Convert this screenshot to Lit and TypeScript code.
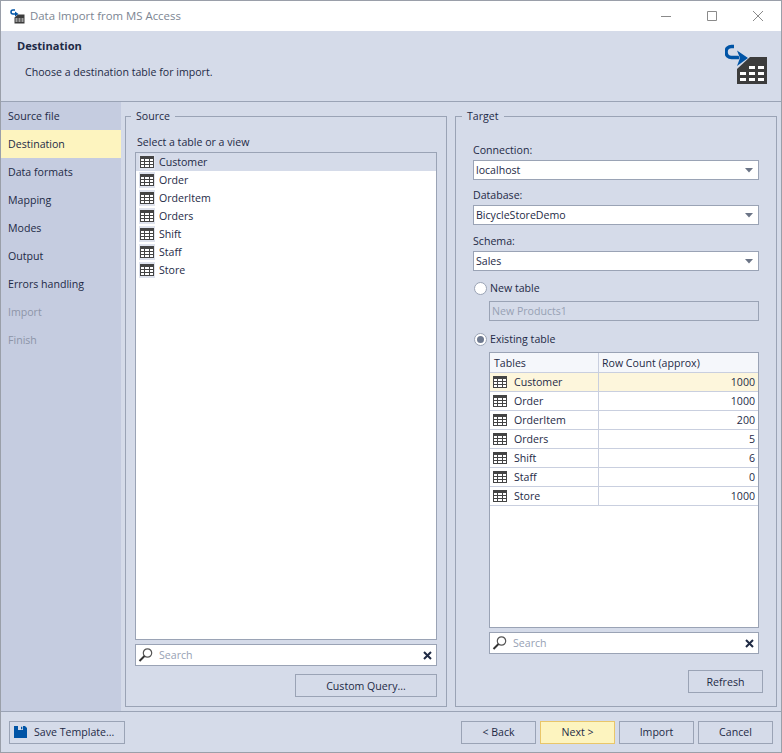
import { LitElement, css, html, svg } from 'lit';
import { customElement } from 'lit/decorators.js';

const SIDE = [
    ['Source file', ''],
    ['Destination', 'active'],
    ['Data formats', ''],
    ['Mapping', ''],
    ['Modes', ''],
    ['Output', ''],
    ['Errors handling', ''],
    ['Import', 'off'],
    ['Finish', 'off'],
];
const SOURCE = ['Customer', 'Order', 'OrderItem', 'Orders', 'Shift', 'Staff', 'Store'];
const COUNTS = ['1000', '1000', '200', '5', '6', '0', '1000'];

const gridIcon = svg`<svg class="grid" width="14" height="12" viewBox="0 0 14 12">
    <path fill="#444" d="M0 0h14v12H0z"/>
    <path fill="#fff" d="M1 3h3v2H1zM5 3h4v2H5zM10 3h3v2h-3zM1 6h3v2H1zM5 6h4v2H5zM10 6h3v2h-3zM1 9h3v2H1zM5 9h4v2H5zM10 9h3v2h-3z"/>
</svg>`;

const searchIcon = svg`<svg width="16" height="16" viewBox="0 0 16 16">
    <circle cx="9.500" cy="6" r="4.200" fill="none" stroke="#555" stroke-width="1.200"/>
    <path d="M6.500 9 1.500 14" stroke="#333" stroke-width="2" fill="none"/>
</svg>`;

const clearIcon = svg`<svg width="9" height="9" viewBox="0 0 9 9">
    <path d="M1 1l7 7M8 1 1 8" stroke="#1f2a44" stroke-width="2" fill="none"/>
</svg>`;

const caret = svg`<svg class="caret" width="8" height="5" viewBox="0 0 8 5"><path d="M0 0h8L4 4.500z" fill="#6b7486"/></svg>`;

@customElement('app-root')
export class AppRoot extends LitElement {
    static styles = css`
        :host {
            display: flex;
            flex-direction: column;
            box-sizing: border-box;
            width: 782px;
            height: 753px;
            border: 1px solid #9a9fa9;
            background: #d5dbe9;
            color: #1e2a46;
            font: 10.6px/16px "Open Sans", sans-serif;
            overflow: hidden;
        }
        * { box-sizing: border-box; }

        .titlebar {
            display: flex;
            align-items: center;
            height: 30px;
            background: #fff;
            padding-left: 9px;
            color: #7c8592;
            font-size: 11.4px;
            flex: none;
        }
        .titlebar .app { margin-right: 5px; }
        .titlebar .label { flex: 1; }
        .wc { display: flex; }
        .wc span { width: 46px; height: 30px; display: flex; align-items: center; justify-content: center; }

        .header {
            position: relative;
            height: 71px;
            flex: none;
            border-bottom: 1px solid #9aa3b5;
            padding: 7px 16px;
        }
        .header h1 { margin: 0; font-size: 11.1px; line-height: 16px; font-weight: 700; }
        .header p { margin: 10px 0 0 8px; }
        .header svg { position: absolute; right: 14px; top: 13px; }

        .body { flex: 1; display: flex; min-height: 0; }
        .side { width: 120px; flex: none; background: #c5cce0; }
        .side div { height: 28px; line-height: 28px; padding-left: 7px; }
        .side .active { background: #fdf4bf; }
        .side .off { color: #8d95a8; }

        .panes { flex: 1; display: flex; gap: 8px; padding: 6px 4px 4px 4px; min-width: 0; }
        fieldset {
            margin: 0;
            min-width: 0;
            border: 1px solid #9aa3b5;
            padding: 0;
            flex: none;
            display: flex;
            flex-direction: column;
        }
        legend { padding: 0 5px; line-height: 16px; }
        .source legend { margin-left: -4px; }
        .target legend { margin-left: -11px; }
        .source { width: 322px; padding: 10px 9px 9px 9px; }
        .target { width: 322px; padding: 18px 17px 13px 17px; }

        .caption { line-height: 16px; margin-bottom: 2px; padding-left: 2px; }
        .list { flex: 1; background: #fff; border: 1px solid #9aa3b5; min-height: 0; }
        .list div { display: flex; align-items: center; height: 18px; padding-left: 3px; gap: 4px; }
        .list .sel { background: #d5dbe9; }
        .list .grid { width: 16px; height: 16px; padding: 2px 1px; background: #dfe3ee; }

        .search {
            flex: none;
            display: flex;
            align-items: center;
            height: 22px;
            margin-top: 4px;
            background: #fff;
            border: 1px solid #9aa3b5;
            padding: 0 4px 0 2px;
            color: #97a1b4;
        }
        .search span { flex: 1; margin-left: 5px; }

        button {
            font: inherit;
            color: inherit;
            background: #d5dbe9;
            border: 1px solid #9aa3b5;
            padding: 0;
            height: 23px;
            display: inline-flex;
            align-items: center;
            justify-content: center;
            white-space: nowrap;
        }
        .custom { width: 142px; align-self: flex-end; margin-top: 8px; }
        .refresh { width: 75px; align-self: flex-end; margin: 16px -4px 0 0; }

        .field-label { line-height: 16px; margin-bottom: 2px; }
        .select {
            display: flex;
            align-items: center;
            justify-content: space-between;
            height: 20px;
            background: #fff;
            border: 1px solid #9aa3b5;
            padding: 0 4px 0 2px;
            margin-bottom: 8px;
        }
        .select.tight { margin-bottom: 7px; }
        .select .caret { margin-right: 1px; }

        .radio { display: flex; align-items: center; height: 16px; gap: 3px; margin-left: 1px; }
        .radio.first { margin-top: 2px; }
        .dot {
            width: 13px;
            height: 13px;
            border-radius: 50%;
            background: #fff;
            border: 1px solid #9aa3b5;
            display: flex;
            align-items: center;
            justify-content: center;
        }
        .dot.on::after {
            content: '';
            width: 7px;
            height: 7px;
            border-radius: 50%;
            background: #6f7a90;
        }
        .disabled-input {
            height: 20px;
            margin: 5px 0 10px 16px;
            border: 1px solid #9aa3b5;
            color: #97a1b4;
            line-height: 18px;
            padding-left: 2px;
        }

        .table {
            flex: 1;
            min-height: 0;
            margin: 5px 0 0 16px;
            background: #fff;
            border: 1px solid #9aa3b5;
        }
        .table .row { display: grid; grid-template-columns: 109px 1fr; height: 19px; border-bottom: 1px solid #c9cfdf; }
        .table .row > div { display: flex; align-items: center; }
        .table .row > div:first-child { border-right: 1px solid #c9cfdf; padding-left: 3px; gap: 7px; }
        .table .num { justify-content: flex-end; padding-right: 3px; }
        .table .head { height: 20px; background: #f5f7fb; }
        .table .head > div:first-child { padding-left: 4px; }
        .table .head > div:last-child { padding-left: 3px; }
        .table .cur > div { background: #fdf6dc; }
        .target .search { margin-left: 16px; }

        .footer {
            flex: none;
            display: flex;
            align-items: center;
            height: 41px;
            border-top: 1px solid #9aa3b5;
            padding: 0 8px 0 8px;
            gap: 4px;
        }
        .footer button { width: 75px; }
        .footer .save { width: 116px; margin-right: auto; gap: 7px; justify-content: flex-start; padding-left: 4px; }
        .footer .next { background: #fdf4bf; border-color: #e9c66a; }
    `;

    render() {
        return html`
            <div class="titlebar">
                <svg class="app" width="15" height="15" viewBox="0 0 15 15">
                    <path d="M5 1H3a2 2 0 0 0 0 4h2.500" fill="none" stroke="#0054a6" stroke-width="1.500"/>
                    <path d="M5 2.500 8.500 5 5 7.500z" fill="#0054a6"/>
                    <path d="M8 5.500h6.500v9h-10V8.500z" fill="#3c3c3c"/>
                    <path fill="#fff" d="M5.500 9.500h2v1h-2zM8.500 9.500h2v1h-2zM11.500 9.500h2v1h-2zM5.500 11.500h2v1h-2zM8.500 11.500h2v1h-2zM11.500 11.500h2v1h-2z"/>
                </svg>
                <span class="label">Data Import from MS Access</span>
                <div class="wc">
                    <span><svg width="10" height="10"><path d="M0 5.500h10" stroke="#8a8a8a"/></svg></span>
                    <span><svg width="10" height="10"><path d="M.5.5h9v9h-9z" fill="none" stroke="#8a8a8a"/></svg></span>
                    <span><svg width="10" height="10"><path d="M0 0l10 10M10 0 0 10" stroke="#8a8a8a"/></svg></span>
                </div>
            </div>
            <div class="header">
                <h1>Destination</h1>
                <p>Choose a destination table for import.</p>
                <svg width="42" height="40" viewBox="0 0 42 40">
                    <path d="M12 25l13-12h17v27H12z" fill="#3c3c3c"/>
                    <path fill="#fff" d="M24 22h6v3h-6zM33 22h6v3h-6zM15 28h6v3h-6zM24 28h6v3h-6zM33 28h6v3h-6zM15 34h6v3h-6zM24 34h6v3h-6zM33 34h6v3h-6z"/>
                    <path d="M9 2.500H6.500a4.800 4.800 0 0 0 0 11H15" fill="none" stroke="#0054a6" stroke-width="3.600"/>
                    <path d="M12 6.500 23 14 12 22l3-8z" fill="#0054a6" stroke="#d5dbe9" stroke-width="1" paint-order="stroke"/>
                </svg>
            </div>
            <div class="body">
                <div class="side">
                    ${SIDE.map(([t, c]) => html`<div class=${c}>${t}</div>`)}
                </div>
                <div class="panes">
                    <fieldset class="source">
                        <legend>Source</legend>
                        <div class="caption">Select a table or a view</div>
                        <div class="list">
                            ${SOURCE.map((s, i) => html`<div class=${i === 0 ? 'sel' : ''}>${gridIcon}${s}</div>`)}
                        </div>
                        <div class="search">${searchIcon}<span>Search</span>${clearIcon}</div>
                        <button class="custom">Custom Query...</button>
                    </fieldset>
                    <fieldset class="target">
                        <legend>Target</legend>
                        <div class="field-label">Connection:</div>
                        <div class="select tight">localhost${caret}</div>
                        <div class="field-label">Database:</div>
                        <div class="select">BicycleStoreDemo${caret}</div>
                        <div class="field-label">Schema:</div>
                        <div class="select tight">Sales${caret}</div>
                        <div class="radio first"><span class="dot"></span>New table</div>
                        <div class="disabled-input">New Products1</div>
                        <div class="radio"><span class="dot on"></span>Existing table</div>
                        <div class="table">
                            <div class="row head"><div>Tables</div><div>Row Count (approx)</div></div>
                            ${SOURCE.map((s, i) => html`
                                <div class="row ${i === 0 ? 'cur' : ''}">
                                    <div>${gridIcon}${s}</div>
                                    <div class="num">${COUNTS[i]}</div>
                                </div>`)}
                        </div>
                        <div class="search">${searchIcon}<span>Search</span>${clearIcon}</div>
                        <button class="refresh">Refresh</button>
                    </fieldset>
                </div>
            </div>
            <div class="footer">
                <button class="save">
                    <svg width="13" height="12" viewBox="0 0 13 12"><path fill-rule="evenodd" d="M0 0h11l2 2v10H0zM4 0v4h5V0zM7 .8h1.300v2.400H7z" fill="#0054a6"/></svg>
                    Save Template...
                </button>
                <button>&lt; Back</button>
                <button class="next">Next &gt;</button>
                <button>Import</button>
                <button>Cancel</button>
            </div>
        `;
    }
}
